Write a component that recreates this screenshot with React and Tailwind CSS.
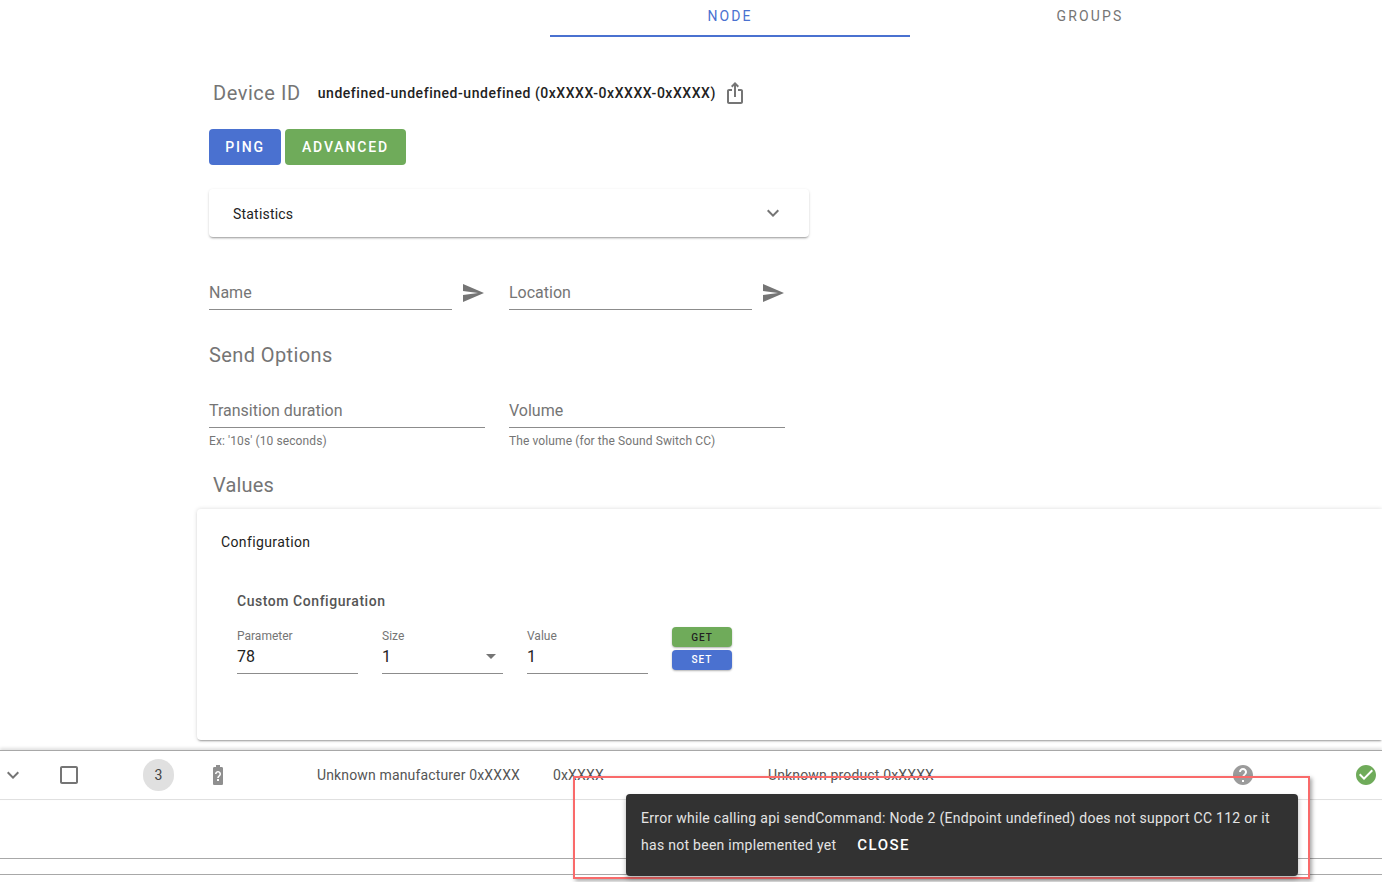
const paths = {
  send: "M2.01 21L23 12 2.01 3 2 10l15 2-15 2z",
  share:
    "M16 5l-1.42 1.42-1.59-1.59V16h-1.98V4.83L9.42 6.42 8 5l4-4 4 4zm4 5v11c0 1.1-.9 2-2 2H6c-1.11 0-2-.9-2-2V10c0-1.11.89-2 2-2h3v2H6v11h12V10h-3V8h3c1.1 0 2 .89 2 2z",
  expand: "M16.59 8.59L12 13.17 7.41 8.59 6 10l6 6 6-6z",
  checkbox:
    "M19 5v14H5V5h14m0-2H5c-1.1 0-2 .9-2 2v14c0 1.1.9 2 2 2h14c1.1 0 2-.9 2-2V5c0-1.1-.9-2-2-2z",
  battery:
    "M15.67 4H14V2h-4v2H8.33C7.6 4 7 4.6 7 5.33v15.33C7 21.4 7.6 22 8.33 22h7.33c.74 0 1.34-.6 1.34-1.33V5.33C17 4.6 16.4 4 15.67 4zm-2.72 13.95h-1.9v-1.9h1.9v1.9zm1.35-5.26s-.38.42-.67.71c-.48.48-.83 1.15-.83 1.6h-1.6c0-.83.46-1.52.93-2l.93-.94c.27-.27.44-.65.44-1.06 0-.83-.67-1.5-1.5-1.5s-1.5.67-1.5 1.5H9c0-1.66 1.34-3 3-3s3 1.34 3 3c0 .66-.27 1.26-.7 1.69z",
  help:
    "M12 2C6.48 2 2 6.48 2 12s4.48 10 10 10 10-4.48 10-10S17.52 2 12 2zm1 17h-2v-2h2v2zm2.07-7.75l-.9.92C13.45 12.9 13 13.5 13 15h-2v-.5c0-1.1.45-2.1 1.17-2.83l1.24-1.26c.37-.36.59-.86.59-1.41 0-1.1-.9-2-2-2s-2 .9-2 2H8c0-2.21 1.79-4 4-4s4 1.79 4 4c0 .88-.36 1.68-.93 2.25z",
  check:
    "M12 2C6.48 2 2 6.48 2 12s4.48 10 10 10 10-4.48 10-10S17.52 2 12 2zm-2 15l-5-5 1.41-1.41L10 14.17l7.59-7.59L19 8l-9 9z",
};

function Icon({ d, className }) {
  return (
    <svg viewBox="0 0 24 24" fill="currentColor" className={className}>
      <path d={d} />
    </svg>
  );
}

function TextField({ label, helper, width }) {
  return (
    <div className={width}>
      <div className="h-[32px] border-b border-[#8c8c8c] pt-[5px] text-[16px] leading-[19px] text-[#757575]">
        {label}
      </div>
      {helper && (
        <p className="mt-[6px] text-[12px] leading-[14px] tracking-[0.1px] text-[#757575]">
          {helper}
        </p>
      )}
    </div>
  );
}

function SmallField({ label, value, select }) {
  return (
    <div className="relative w-[121px] h-[45px] border-b border-[#8c8c8c]">
      <div className="text-[12px] leading-[14px] text-[#757575]">{label}</div>
      <div className="mt-[4px] text-[16px] leading-[19px] text-[#222]">
        {value}
      </div>
      {select && (
        <div className="absolute right-[7px] top-[25px] w-0 h-0 border-x-[5px] border-x-transparent border-t-[5px] border-t-[#757575]" />
      )}
    </div>
  );
}

export default function App() {
  return (
    <div className="relative h-[882px] overflow-hidden bg-white font-['Roboto',sans-serif]">
      {/* tabs */}
      <div className="flex pl-[550px] h-[37px]">
        <div className="w-[360px] border-b-2 border-[#4a71d0] pt-[8px] text-center text-[14px] leading-[16px] tracking-[2px] text-[#4a71d0]">
          NODE
        </div>
        <div className="w-[360px] pt-[8px] text-center text-[14px] leading-[16px] tracking-[2.2px] text-[#757575]">
          GROUPS
        </div>
      </div>

      {/* node details */}
      <div className="pl-[209px]">
        <div className="flex items-center h-[40px] mt-[36px] pl-[4px]">
          <span className="text-[20px] leading-[24px] tracking-[0.55px] text-[#757575]">
            Device ID
          </span>
          <span className="ml-[17px] text-[14px] font-medium tracking-[0.54px] text-[#222]">
            undefined-undefined-undefined (0xXXXX-0xXXXX-0xXXXX)
          </span>
          <Icon d={paths.share} className="ml-[7px] w-[24px] h-[24px] text-[#757575]" />
        </div>

        <div className="flex gap-[4px] mt-[16px]">
          <button className="w-[72px] h-[36px] rounded-[4px] bg-[#4a71d0] text-[14px] font-medium tracking-[1.75px] text-white">
            PING
          </button>
          <button className="w-[121px] h-[36px] rounded-[4px] bg-[#6fab5a] text-[14px] font-medium tracking-[1.85px] text-white">
            ADVANCED
          </button>
        </div>

        <div className="flex items-center justify-between w-[600px] h-[48px] mt-[24px] pl-[24px] pr-[24px] rounded-[4px] bg-white shadow-[0_2px_2px_-1px_rgba(0,0,0,0.3),0_1px_3px_0_rgba(0,0,0,0.15)]">
          <span className="pt-[2px] text-[14px] tracking-[0.2px] text-[#222]">Statistics</span>
          <Icon d={paths.expand} className="w-[24px] h-[24px] text-[#757575]" />
        </div>

        <div className="flex mt-[41px] h-[32px]">
          <TextField label="Name" width="w-[243px]" />
          <Icon d={paths.send} className="ml-[9px] mt-[3px] w-[24px] h-[24px] text-[#757575]" />
          <div className="w-[24px]" />
          <TextField label="Location" width="w-[243px]" />
          <Icon d={paths.send} className="ml-[9px] mt-[3px] w-[24px] h-[24px] text-[#757575]" />
        </div>

        <h2 className="mt-[33px] text-[20px] leading-[24px] tracking-[0.4px] text-[#757575]">
          Send Options
        </h2>

        <div className="flex gap-[24px] mt-[29px]">
          <TextField label="Transition duration" helper="Ex: '10s' (10 seconds)" width="w-[276px]" />
          <TextField label="Volume" helper="The volume (for the Sound Switch CC)" width="w-[276px]" />
        </div>

        <h2 className="mt-[25px] pl-[4px] text-[20px] leading-[24px] tracking-[0.15px] text-[#757575]">
          Values
        </h2>
      </div>

      {/* configuration card */}
      <div className="ml-[197px] mt-[12px] h-[231px] rounded-l-[4px] bg-white pl-[24px] pt-[24px] shadow-[0_2px_2px_-1px_rgba(0,0,0,0.35),0_0_4px_0_rgba(0,0,0,0.15)]">
        <div className="text-[14px] leading-[18px] tracking-[0.38px] text-[#222]">Configuration</div>
        <div className="pl-[16px] mt-[41px]">
          <div className="text-[14px] leading-[18px] font-medium text-[#555] tracking-[0.55px]">
            Custom Configuration
          </div>
          <div className="flex gap-[24px] mt-[19px]">
            <SmallField label="Parameter" value="78" />
            <SmallField label="Size" value="1" select />
            <SmallField label="Value" value="1" />
            <div className="flex flex-col gap-[3px] -mt-[2px]">
              <button className="w-[60px] h-[20px] rounded-[4px] bg-[#6fab5a] text-[10px] font-medium tracking-[1px] text-[#222] shadow-[0_1px_2px_rgba(0,0,0,0.3)]">
                GET
              </button>
              <button className="w-[60px] h-[20px] pb-[1px] rounded-[4px] bg-[#4a71d0] text-[10px] font-medium tracking-[1px] text-white shadow-[0_1px_2px_rgba(0,0,0,0.3)]">
                SET
              </button>
            </div>
          </div>
        </div>
      </div>

      {/* table row */}
      <div className="flex items-center mt-[10px] h-[50px] border-y border-t-[#a8a8a8] border-b-[#e0e0e0] shadow-[0_-2px_3px_rgba(0,0,0,0.12)] text-[14px] text-[#555]">
        <div className="w-[26px] flex justify-center">
          <Icon d={paths.expand} className="w-[24px] h-[24px] text-[#757575]" />
        </div>
        <div className="w-[86px] flex justify-center">
          <Icon d={paths.checkbox} className="w-[24px] h-[24px] text-[#757575]" />
        </div>
        <div className="w-[93px] flex justify-center">
          <div className="flex items-center justify-center w-[31px] h-[32px] rounded-full bg-[#e0e0e0] text-[14px] text-[#444]">
            3
          </div>
        </div>
        <div className="w-[26px] flex justify-center">
          <Icon d={paths.battery} className="w-[24px] h-[24px] text-[#8f8f8f]" />
        </div>
        <div className="w-[236px] ml-[86px] tracking-[0.15px]">Unknown manufacturer 0xXXXX</div>
        <div className="w-[215px] tracking-[0.15px]">0xXXXX</div>
        <div className="w-[463px] tracking-[0.15px]">Unknown product 0xXXXX</div>
        <div className="w-[24px] flex justify-center">
          <Icon d={paths.help} className="w-[24px] h-[24px] text-[#9b9b9b]" />
        </div>
        <div className="ml-[99px] w-[24px] flex justify-center">
          <Icon d={paths.check} className="w-[24px] h-[24px] text-[#6fab5a]" />
        </div>
      </div>
      <div className="h-[59px] border-b border-[#a8a8a8]" />
      <div className="h-[16px] border-b border-[#a8a8a8]" />

      {/* annotation box over the snackbar */}
      <div className="absolute left-[573px] top-[776px] w-[737px] h-[103px] border-2 border-[#f96a6a] shadow-[2px_2px_4px_rgba(0,0,0,0.35)]" />

      {/* snackbar */}
      <div className="absolute left-[626px] top-[794px] w-[672px] h-[82px] rounded-[4px] bg-[#323232] pl-[15px] pr-[10px] pt-[11px] text-[14px] leading-[27px] tracking-[0.28px] text-[#e4e4e4] shadow-[0_3px_5px_rgba(0,0,0,0.3)]">
        Error while calling api sendCommand: Node 2 (Endpoint undefined) does not support CC 112 or it
        <br />
        has not been implemented yet
        <span className="ml-[21px] text-[15px] font-medium tracking-[1.5px] text-white">CLOSE</span>
      </div>
    </div>
  );
}
